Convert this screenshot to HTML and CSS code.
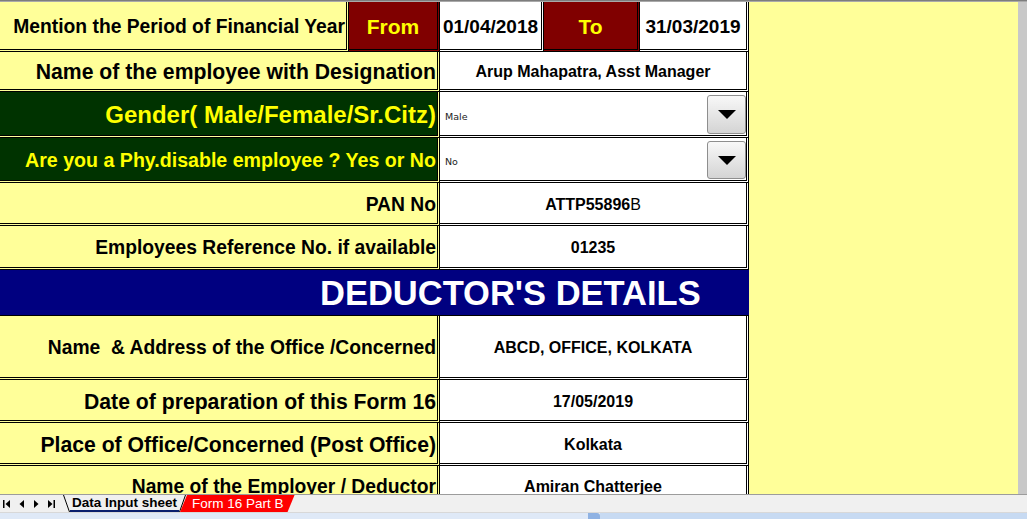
FILE: index.html
```html
<!DOCTYPE html>
<html>
<head>
<meta charset="utf-8">
<link rel="stylesheet" href="styles.css">
</head>
<body>
<div class="app">
  <div class="topline"></div>
  <div class="main">
    <div class="sheet">
      <div class="cell lbl s19">Mention the Period of Financial Year</div>
      <div class="cell maroon">From</div>
      <div class="cell val date">01/04/2018</div>
      <div class="cell maroon">To</div>
      <div class="cell val date">31/03/2019</div>

      <div class="cell lbl span2 s21">Name of the employee with Designation</div>
      <div class="cell val span3">Arup Mahapatra, Asst Manager</div>

      <div class="cell lbl green span2 s24">Gender( Male/Female/Sr.Citz)</div>
      <div class="cell drop span3"><span class="dd-text">Male</span><span class="dd-btn"><svg width="18" height="9" viewBox="0 0 18 9"><path d="M0 0H18L9 9Z" fill="#000"/></svg></span></div>

      <div class="cell lbl green span2 s195">Are you a Phy.disable employee ? Yes or No</div>
      <div class="cell drop span3"><span class="dd-text">No</span><span class="dd-btn"><svg width="18" height="9" viewBox="0 0 18 9"><path d="M0 0H18L9 9Z" fill="#000"/></svg></span></div>

      <div class="cell lbl span2 s19">PAN No</div>
      <div class="cell val span3">ATTP55896<span class="reg">B</span></div>

      <div class="cell lbl span2 s19">Employees Reference No. if available</div>
      <div class="cell val span3">01235</div>

      <div class="cell banner">DEDUCTOR'S DETAILS</div>

      <div class="cell lbl span2 s19">Name &nbsp;&amp; Address of the Office /Concerned</div>
      <div class="cell val span3">ABCD, OFFICE, KOLKATA</div>

      <div class="cell lbl span2 s21">Date of preparation of this Form 16</div>
      <div class="cell val span3">17/05/2019</div>

      <div class="cell lbl span2 s21">Place of Office/Concerned (Post Office)</div>
      <div class="cell val span3">Kolkata</div>

      <div class="cell lbl span2 s19">Name of the Employer / Deductor</div>
      <div class="cell val span3">Amiran Chatterjee</div>
    </div>
    <div class="filler"></div>
    <div class="vscroll"></div>
  </div>
  <div class="tabbar">
    <div class="nav">
      <svg width="8" height="8" viewBox="0 0 8 8"><rect x="0" y="0" width="1.5" height="8" fill="#000"/><path d="M7 0V8L2.5 4Z" fill="#000"/></svg>
      <svg width="6" height="8" viewBox="0 0 6 8"><path d="M5 0V8L0.5 4Z" fill="#000"/></svg>
      <svg width="6" height="8" viewBox="0 0 6 8"><path d="M1 0V8L5.5 4Z" fill="#000"/></svg>
      <svg width="8" height="8" viewBox="0 0 8 8"><path d="M1 0V8L5.5 4Z" fill="#000"/><rect x="6.5" y="0" width="1.5" height="8" fill="#000"/></svg>
    </div>
    <div class="tab active">
      <svg class="slant" width="7" height="17" viewBox="0 0 7 17"><path d="M0.5 0L6.5 17" stroke="#000" stroke-width="1"/></svg>
      <span class="tab-text">Data Input sheet</span>
      <svg class="slant" width="7" height="17" viewBox="0 0 7 17"><path d="M0.5 17L6.5 0" stroke="#000" stroke-width="1"/></svg>
    </div>
    <div class="tab red">Form 16 Part B</div>
  </div>
  <div class="hscroll">
    <div class="hs-left"></div>
    <div class="hs-cap"></div>
    <div class="hs-right"></div>
  </div>
</div>
</body>
</html>
```

FILE: styles.css
```css
html, body {
  margin: 0;
  padding: 0;
}
body {
  width: 1027px;
  height: 519px;
  overflow: hidden;
  font-family: "Liberation Sans", Arial, sans-serif;
  background: #f0f0f0;
}
.app {
  display: flex;
  flex-direction: column;
  width: 1027px;
  height: 519px;
}
.topline {
  height: 1px;
  border-top: 1px solid #7d7d7d;
  background: #a9a9a9;
  flex: none;
}
.main {
  display: flex;
  height: 492px;
  overflow: hidden;
  flex: none;
}
.sheet {
  width: 749px;
  flex: none;
  display: grid;
  grid-template-columns: 349px 91px 104px 96px 109px;
  grid-template-rows: 50px 40px 46px 45px 43px 44px 46px 64px 43px 43px 42px;
  background: #ffff99;
  align-self: flex-start;
}
.filler {
  flex: 1;
  background: #ffff99;
}
.vscroll {
  width: 9px;
  flex: none;
  background: #c8c8c8;
}
.cell {
  box-sizing: border-box;
  border-right: 3px double #000;
  border-bottom: 3px double #000;
  padding-top: 3px;
  display: flex;
  align-items: center;
  white-space: nowrap;
  overflow: hidden;
  color: #000;
}
.span2 { grid-column: 1 / 3; }
.span3 { grid-column: 3 / 6; }
.lbl {
  background: #ffff99;
  justify-content: flex-end;
  padding-right: 1px;
  font-weight: bold;
}
.s19 { font-size: 19.3px; }
.s195 { font-size: 19.6px; }
.s21 { font-size: 21.2px; }
.s24 { font-size: 24px; }
.green {
  background: #003300;
  background-clip: padding-box;
  color: #ffff00;
}
.maroon {
  background: #800000;
  color: #ffff00;
  font-weight: bold;
  font-size: 21px;
  justify-content: center;
}
.val {
  background: #fff;
  justify-content: center;
  font-weight: bold;
  font-size: 16px;
}
.val.date {
  font-size: 19px;
}
.reg { font-weight: normal; }
.drop {
  background: #fff;
  padding: 1px 0 0 5px;
  align-items: stretch;
}
.dd-text {
  color: #222;
  align-self: center;
  flex: 1;
  font-family: "DejaVu Sans", sans-serif;
  font-size: 9.5px;
  padding-top: 4px;
}
.dd-btn {
  width: 39px;
  box-sizing: border-box;
  margin: 2px 0 1px 0;
  border: 1px solid #8e8e8e;
  border-radius: 3px;
  background: linear-gradient(#f8f8f8, #e6e6e6 50%, #d4d4d4);
  display: flex;
  align-items: center;
  justify-content: center;
}
.banner {
  grid-column: 1 / 6;
  background: #000080;
  color: #fff;
  font-weight: bold;
  font-size: 34.5px;
  padding-left: 320px;
  padding-top: 2px;
  border-right: none;
  border-bottom: 1px solid #000;
}
.tabbar {
  height: 17px;
  flex: none;
  border-top: 1px solid #9c9c9c;
  background: #f0f0f0;
  display: flex;
  align-items: stretch;
  font-size: 13.5px;
}
.nav {
  width: 63px;
  display: flex;
  align-items: center;
  gap: 8px;
  padding-left: 3px;
  box-sizing: border-box;
}
.tab {
  display: flex;
  align-items: center;
}
.tab.active {
  font-weight: bold;
}
.tab-text {
  height: 100%;
  display: flex;
  align-items: center;
  box-sizing: border-box;
  border-bottom: 2px solid #0a1f6e;
  padding: 0 2px;
}
.tab.red {
  margin-left: -6px;
  background: #f00;
  color: #fff;
  padding: 0 11px 0 12px;
  clip-path: polygon(7px 0, 100% 0, calc(100% - 7px) 100%, 0 100%);
}
.hscroll {
  height: 7px;
  flex: none;
  display: flex;
  border-top: 1px solid #d8d8d8;
  box-sizing: border-box;
}
.hs-left {
  width: 588px;
  background: #dfe9f7;
}
.hs-cap {
  width: 12px;
  background: #8fb2e3;
  border-radius: 0 3px 0 0;
}
.hs-right {
  flex: 1;
  background: #c7daf2;
}
```
